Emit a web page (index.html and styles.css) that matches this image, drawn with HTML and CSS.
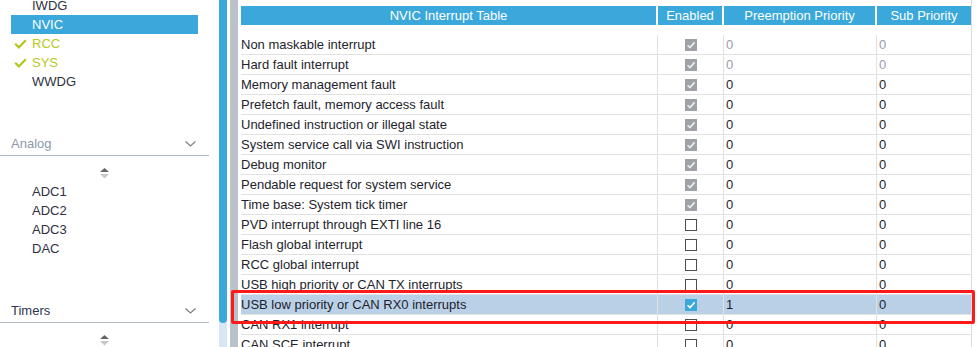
FILE: index.html
```html
<!DOCTYPE html>
<html>
<head>
<meta charset="utf-8">
<link rel="stylesheet" href="styles.css">
</head>
<body>
<div class="app">
  <aside class="side">
    <ul class="items first">
      <li class="item">IWDG</li>
      <li class="item selected">NVIC</li>
      <li class="item ok"><svg class="tick" width="13" height="10" viewBox="0 0 13 10"><polyline points="1.2,4.8 4.8,8.4 11.8,1.2" fill="none" stroke="#b3c71a" stroke-width="2.2"/></svg>RCC</li>
      <li class="item ok"><svg class="tick" width="13" height="10" viewBox="0 0 13 10"><polyline points="1.2,4.8 4.8,8.4 11.8,1.2" fill="none" stroke="#b3c71a" stroke-width="2.2"/></svg>SYS</li>
      <li class="item">WWDG</li>
    </ul>
    <div class="group light">
      <span>Analog</span>
      <svg class="chev" width="11" height="6" viewBox="0 0 11 6"><polyline points="0.5,0.5 5.5,5 10.5,0.5" fill="none" stroke="#7d7d7d" stroke-width="1.2"/></svg>
    </div>
    <div class="sorter"><svg width="9" height="11" viewBox="0 0 9 11"><polygon points="0,4 4.5,0 9,4" fill="#666"/><polygon points="0,6 9,6 4.5,10.5" fill="#c8c8c8"/></svg></div>
    <ul class="items">
      <li class="item">ADC1</li>
      <li class="item">ADC2</li>
      <li class="item">ADC3</li>
      <li class="item">DAC</li>
    </ul>
    <div class="group dark">
      <span>Timers</span>
      <svg class="chev" width="11" height="6" viewBox="0 0 11 6"><polyline points="0.5,0.5 5.5,5 10.5,0.5" fill="none" stroke="#7d7d7d" stroke-width="1.2"/></svg>
    </div>
    <div class="sorter"><svg width="9" height="11" viewBox="0 0 9 11"><polygon points="0,4 4.5,0 9,4" fill="#666"/><polygon points="0,6 9,6 4.5,10.5" fill="#c8c8c8"/></svg></div>
  </aside>
  <div class="scroll"><div class="thumb"></div></div>
  <div class="split"></div>
  <main class="main">
    <div class="thead">
      <div class="th">NVIC Interrupt Table</div>
      <div class="th">Enabled</div>
      <div class="th">Preemption Priority</div>
      <div class="th last">Sub Priority</div>
    </div>
    <div class="tbody">
      <div class="tr"><div class="td name">Non maskable interrupt</div><div class="td en"><span class="cb dis"><svg width="12" height="12" viewBox="0 0 12 12"><polyline points="2.6,6.2 5,8.6 9.6,3.4" fill="none" stroke="#eceeef" stroke-width="1.6"/></svg></span></div><div class="td num grey">0</div><div class="td num grey">0</div></div>
      <div class="tr"><div class="td name">Hard fault interrupt</div><div class="td en"><span class="cb dis"><svg width="12" height="12" viewBox="0 0 12 12"><polyline points="2.6,6.2 5,8.6 9.6,3.4" fill="none" stroke="#eceeef" stroke-width="1.6"/></svg></span></div><div class="td num grey">0</div><div class="td num grey">0</div></div>
      <div class="tr"><div class="td name">Memory management fault</div><div class="td en"><span class="cb dis"><svg width="12" height="12" viewBox="0 0 12 12"><polyline points="2.6,6.2 5,8.6 9.6,3.4" fill="none" stroke="#eceeef" stroke-width="1.6"/></svg></span></div><div class="td num">0</div><div class="td num">0</div></div>
      <div class="tr"><div class="td name">Prefetch fault, memory access fault</div><div class="td en"><span class="cb dis"><svg width="12" height="12" viewBox="0 0 12 12"><polyline points="2.6,6.2 5,8.6 9.6,3.4" fill="none" stroke="#eceeef" stroke-width="1.6"/></svg></span></div><div class="td num">0</div><div class="td num">0</div></div>
      <div class="tr"><div class="td name">Undefined instruction or illegal state</div><div class="td en"><span class="cb dis"><svg width="12" height="12" viewBox="0 0 12 12"><polyline points="2.6,6.2 5,8.6 9.6,3.4" fill="none" stroke="#eceeef" stroke-width="1.6"/></svg></span></div><div class="td num">0</div><div class="td num">0</div></div>
      <div class="tr"><div class="td name">System service call via SWI instruction</div><div class="td en"><span class="cb dis"><svg width="12" height="12" viewBox="0 0 12 12"><polyline points="2.6,6.2 5,8.6 9.6,3.4" fill="none" stroke="#eceeef" stroke-width="1.6"/></svg></span></div><div class="td num">0</div><div class="td num">0</div></div>
      <div class="tr"><div class="td name">Debug monitor</div><div class="td en"><span class="cb dis"><svg width="12" height="12" viewBox="0 0 12 12"><polyline points="2.6,6.2 5,8.6 9.6,3.4" fill="none" stroke="#eceeef" stroke-width="1.6"/></svg></span></div><div class="td num">0</div><div class="td num">0</div></div>
      <div class="tr"><div class="td name">Pendable request for system service</div><div class="td en"><span class="cb dis"><svg width="12" height="12" viewBox="0 0 12 12"><polyline points="2.6,6.2 5,8.6 9.6,3.4" fill="none" stroke="#eceeef" stroke-width="1.6"/></svg></span></div><div class="td num">0</div><div class="td num">0</div></div>
      <div class="tr"><div class="td name">Time base: System tick timer</div><div class="td en"><span class="cb dis"><svg width="12" height="12" viewBox="0 0 12 12"><polyline points="2.6,6.2 5,8.6 9.6,3.4" fill="none" stroke="#eceeef" stroke-width="1.6"/></svg></span></div><div class="td num">0</div><div class="td num">0</div></div>
      <div class="tr"><div class="td name">PVD interrupt through EXTI line 16</div><div class="td en"><span class="cb off"></span></div><div class="td num">0</div><div class="td num">0</div></div>
      <div class="tr"><div class="td name">Flash global interrupt</div><div class="td en"><span class="cb off"></span></div><div class="td num">0</div><div class="td num">0</div></div>
      <div class="tr"><div class="td name">RCC global interrupt</div><div class="td en"><span class="cb off"></span></div><div class="td num">0</div><div class="td num">0</div></div>
      <div class="tr"><div class="td name">USB high priority or CAN TX interrupts</div><div class="td en"><span class="cb off"></span></div><div class="td num">0</div><div class="td num">0</div></div>
      <div class="tr sel"><div class="td name">USB low priority or CAN RX0 interrupts</div><div class="td en"><span class="cb on"><svg width="12" height="12" viewBox="0 0 12 12"><polyline points="2.6,6.2 5,8.6 9.6,3.4" fill="none" stroke="#ffffff" stroke-width="1.6"/></svg></span></div><div class="td num">1</div><div class="td num">0</div></div>
      <div class="tr"><div class="td name">CAN RX1 interrupt</div><div class="td en"><span class="cb off"></span></div><div class="td num">0</div><div class="td num">0</div></div>
      <div class="tr"><div class="td name">CAN SCE interrupt</div><div class="td en"><span class="cb off"></span></div><div class="td num">0</div><div class="td num">0</div></div>
    </div>
  </main>
</div>
<div class="mark"></div>
</body>
</html>
```

FILE: styles.css
```css
html, body {
  margin: 0;
  padding: 0;
  background: #ffffff;
  overflow: hidden;
}
body {
  width: 978px;
  height: 347px;
  font-family: "Liberation Sans", Arial, sans-serif;
  font-size: 13px;
  color: #1e1e2c;
  position: relative;
}
.app {
  display: flex;
  height: 347px;
  overflow: hidden;
}
.side {
  width: 209px;
  flex: none;
}
.items {
  list-style: none;
  margin: 0;
  padding: 0;
}
.items.first {
  margin-top: -4px;
}
.item {
  height: 19px;
  line-height: 19px;
  margin-left: 11px;
  width: 187px;
  padding-left: 21px;
  box-sizing: border-box;
  color: #30303e;
  position: relative;
}
.item.selected {
  background: #3aa8db;
  color: #ffffff;
}
.item.ok {
  color: #b6ca1c;
}
.tick {
  position: absolute;
  left: 3px;
  top: 5px;
}
.group {
  margin-top: 41px;
  height: 23px;
  border-bottom: 1px solid #b3bcc2;
  display: flex;
  align-items: center;
  justify-content: space-between;
  padding-left: 11px;
  padding-right: 13px;
}
.group.light {
  color: #8c99ad;
}
.group.dark {
  color: #2f3650;
}
.chev {
  display: block;
}
.sorter {
  height: 26px;
  display: flex;
  justify-content: center;
  padding-top: 12px;
  box-sizing: border-box;
  padding-right: 7px;
}
.sorter svg {
  display: block;
  margin-left: 6px;
}
.scroll {
  margin-left: 10px;
  width: 8px;
  flex: none;
  background: #d6e8f6;
}
.thumb {
  height: 323px;
  background: #3aa8db;
  border-radius: 0 0 4px 4px;
}
.split {
  margin-left: 3px;
  width: 8px;
  flex: none;
  background: #b8c2c8;
}
.main {
  margin-left: 3px;
  width: 731px;
  flex: none;
  border-right: 1px solid #dcdcdc;
  box-sizing: border-box;
  padding-top: 6px;
}
.thead {
  display: grid;
  grid-template-columns: 417px 66px 153px 94px;
  height: 19px;
}
.th {
  background: #3aa8db;
  color: #ffffff;
  text-align: center;
  line-height: 19px;
  margin-right: 2px;
}
.th.last {
  margin-right: 0;
}
.tbody {
  margin-top: 10px;
}
.tr {
  display: grid;
  grid-template-columns: 417px 66px 153px 94px;
  height: 20px;
  border-bottom: 1px solid #e2e2e2;
  box-sizing: border-box;
}
.tr.sel {
  background: #b9d0e6;
}
.td {
  line-height: 20px;
  height: 19px;
  white-space: nowrap;
  overflow: visible;
  border-right: 1px solid #e0e0e0;
}
.td:last-child {
  border-right: none;
}
.name {
  padding-left: 0;
}
.en {
  display: flex;
  justify-content: center;
  padding-top: 4px;
  box-sizing: border-box;
  padding-left: 1px;
}
.num {
  padding-left: 2px;
}
.num.grey {
  color: #9c9ca8;
}
.cb {
  width: 12px;
  height: 12px;
  box-sizing: border-box;
  display: block;
}
.cb svg {
  display: block;
}
.cb.dis {
  background: #9ea2a7;
}
.cb.on {
  background: #3aa8db;
}
.cb.off {
  border: 1px solid #4e4e4e;
  background: #ffffff;
}
.mark {
  position: absolute;
  left: 231px;
  top: 290px;
  width: 744px;
  height: 34px;
  border: 3px solid #ff1a1a;
  border-radius: 2px;
  box-sizing: border-box;
}
```
